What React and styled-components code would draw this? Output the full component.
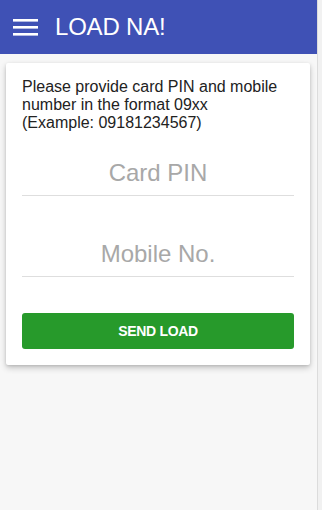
import React, { useState } from "react";
import styled, { createGlobalStyle } from "styled-components";

const GlobalStyle = createGlobalStyle`
  html, body {
    margin: 0;
    padding: 0;
    height: 100%;
  }
  body {
    font-family: "Liberation Sans", Arial, sans-serif;
    background: #f7f7f7;
  }
  #root {
    height: 100%;
  }
`;

const Page = styled.div`
  display: flex;
  width: 322px;
  height: 510px;
  overflow: hidden;
`;

const Main = styled.div`
  flex: 1;
  min-width: 0;
  display: flex;
  flex-direction: column;
  background: #f7f7f7;
`;

const ScrollTrack = styled.div`
  flex: 0 0 4px;
  background: #f1f1f1;
  border-left: 1px solid #dcdcdc;
`;

const Toolbar = styled.header`
  height: 54px;
  background: #3f51b5;
  display: flex;
  align-items: center;
  padding-left: 13px;
  gap: 17px;
  color: white;
`;

const MenuButton = styled.button`
  background: transparent;
  border: none;
  padding: 0;
  display: flex;
  cursor: pointer;
`;

const Title = styled.h1`
  margin: 0;
  font-size: 24px;
  font-weight: 400;
  letter-spacing: -0.2px;
`;

const Card = styled.form`
  margin: 9px 7px 0 6px;
  background: white;
  padding: 15px 16px 16px;
  border-radius: 2px;
  box-shadow: 0 3px 6px rgba(0, 0, 0, 0.2), 0 1px 3px rgba(0, 0, 0, 0.12);
  display: flex;
  flex-direction: column;
`;

const Intro = styled.p`
  margin: 0 0 18px;
  font-size: 16px;
  line-height: 18px;
  color: #222;
`;

const Field = styled.input`
  width: 100%;
  min-width: 0;
  height: 46px;
  box-sizing: border-box;
  border: none;
  border-bottom: 1px solid #dedede;
  margin: 0 0 ${(p) => p.$gap}px;
  font-family: "Liberation Sans", Arial, sans-serif;
  font-size: 24px;
  text-align: center;
  color: #333;
  outline: none;
  padding: 0;
  background: transparent;

  &::placeholder {
    color: #a8a8a8;
  }
`;

const SendButton = styled.button`
  height: 36px;
  border: none;
  border-radius: 3px;
  background: #279a2b;
  color: white;
  font-family: "Liberation Sans", Arial, sans-serif;
  font-weight: 700;
  font-size: 14px;
  letter-spacing: -0.3px;
  cursor: pointer;
`;

function Hamburger() {
  return (
    <svg width="25" height="17" viewBox="0 0 25 17">
      <rect x="0" y="0" width="25" height="2.6" fill="white" />
      <rect x="0" y="7" width="25" height="2.6" fill="white" />
      <rect x="0" y="14" width="25" height="2.6" fill="white" />
    </svg>
  );
}

export default function App() {
  const [pin, setPin] = useState("");
  const [mobile, setMobile] = useState("");

  return (
    <>
      <GlobalStyle />
      <Page>
        <Main>
          <Toolbar>
            <MenuButton type="button" aria-label="menu">
              <Hamburger />
            </MenuButton>
            <Title>LOAD NA!</Title>
          </Toolbar>
          <Card onSubmit={(e) => e.preventDefault()}>
            <Intro>
              Please provide card PIN and mobile number in the format 09xx
              <br />
              (Example: 09181234567)
            </Intro>
            <Field
              $gap={35}
              placeholder="Card PIN"
              value={pin}
              onChange={(e) => setPin(e.target.value)}
            />
            <Field
              $gap={36}
              placeholder="Mobile No."
              value={mobile}
              onChange={(e) => setMobile(e.target.value)}
            />
            <SendButton type="submit">SEND LOAD</SendButton>
          </Card>
        </Main>
        <ScrollTrack />
      </Page>
    </>
  );
}
